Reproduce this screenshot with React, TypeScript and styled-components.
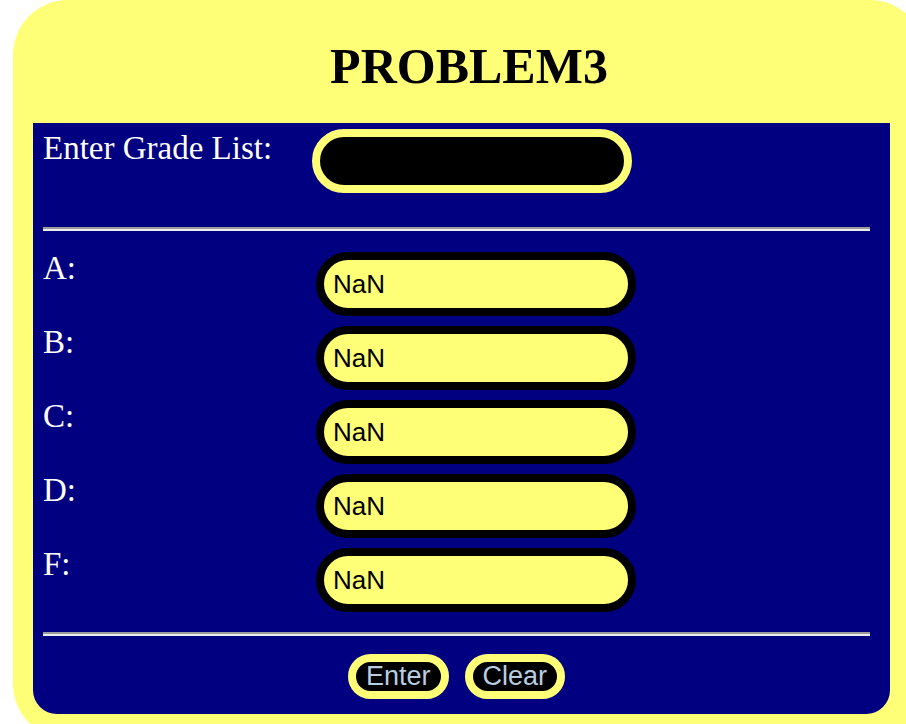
import React from "react";
import styled, { createGlobalStyle } from "styled-components";

const GlobalStyle = createGlobalStyle`
    html, body {
        margin: 0;
        padding: 0;
        background: #ffffff;
        overflow: hidden;
    }
`;

const Panel = styled.div`
    box-sizing: border-box;
    width: 912px;
    margin-left: 13px;
    padding: 38px 35px 25px 20px;
    background: #ffff77;
    border-radius: 55px;
`;

const Title = styled.h1`
    margin: 0 0 28px;
    padding-left: 15px;
    text-align: center;
    font-family: "Liberation Serif", "Times New Roman", serif;
    font-size: 50px;
    font-weight: bold;
    line-height: 57px;
    color: #000000;
`;

const Board = styled.div`
    background: #000080;
    padding: 6px 20px 15px 10px;
    border-radius: 0 0 24px 24px;
`;

const Row = styled.div`
    display: grid;
    grid-template-columns: 269px 320px;
    align-items: start;
`;

const Label = styled.label<{ $lift?: number }>`
    margin-top: ${(p) => -(p.$lift ?? 0)}px;
    font-family: "Liberation Serif", "Times New Roman", serif;
    font-size: 33px;
    line-height: 38px;
    color: #ffffff;
`;

const GradeInput = styled.div`
    box-sizing: border-box;
    width: 320px;
    height: 64px;
    border: 8px solid #ffff77;
    border-radius: 32px;
    background: #000000;
`;

const Rule = styled.hr<{ $top: number; $bottom: number }>`
    height: 0;
    margin: ${(p) => p.$top}px 0 ${(p) => p.$bottom}px;
    border: none;
    border-top: 2px solid #9c9c9c;
    border-bottom: 2px solid #ececec;
`;

const Results = styled.div`
    display: flex;
    flex-direction: column;
    gap: 10px;
`;

const ResultBox = styled.div`
    box-sizing: border-box;
    width: 320px;
    height: 64px;
    margin-left: 4px;
    padding-left: 9px;
    display: flex;
    align-items: center;
    border: 8px solid #000000;
    border-radius: 32px;
    background: #ffff77;
    font-family: "Liberation Sans", Arial, sans-serif;
    font-size: 26px;
    color: #000000;
`;

const Buttons = styled.div`
    display: flex;
    justify-content: center;
    gap: 16px;
`;

const Button = styled.button`
    box-sizing: border-box;
    height: 45px;
    padding: 0 10px;
    border: 8px solid #ffff77;
    border-radius: 23px;
    background: #000000;
    font-family: "Liberation Sans", Arial, sans-serif;
    font-size: 27px;
    line-height: 29px;
    color: #b8cde0;
    cursor: pointer;
`;

const grades = ["A", "B", "C", "D", "F"];

const App: React.FC = () => {
    return (
        <>
            <GlobalStyle />
            <Panel>
                <Title>PROBLEM3</Title>
                <Board>
                    <Row>
                        <Label>Enter Grade List:</Label>
                        <GradeInput />
                    </Row>
                    <Rule $top={34} $bottom={21} />
                    <Results>
                        {grades.map((g) => (
                            <Row key={g}>
                                <Label $lift={3}>{g}:</Label>
                                <ResultBox>NaN</ResultBox>
                            </Row>
                        ))}
                    </Results>
                    <Rule $top={20} $bottom={18} />
                    <Buttons>
                        <Button>Enter</Button>
                        <Button>Clear</Button>
                    </Buttons>
                </Board>
            </Panel>
        </>
    );
};

export default App;
